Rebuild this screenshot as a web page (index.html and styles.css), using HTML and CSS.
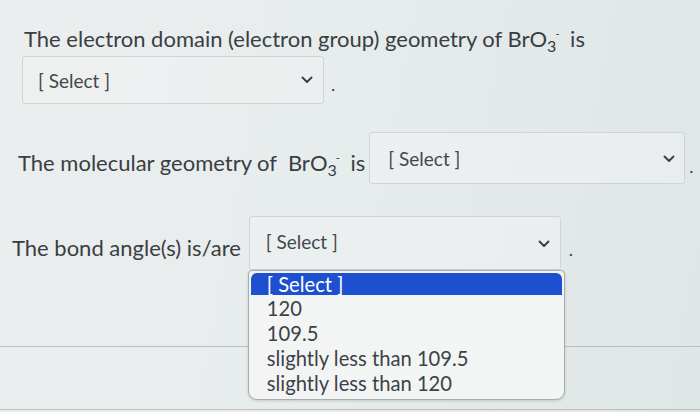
FILE: index.html
```html
<!DOCTYPE html>
<html>
<head>
<meta charset="utf-8">
<link rel="stylesheet" href="styles.css">
</head>
<body>
<div class="page">
  <p class="q q1">The electron domain (electron group) geometry of BrO<sub>3</sub><sup>-</sup> is</p>
  <div class="row r1">
    <div class="select s1"><span class="val">[ Select ]</span><svg class="chev" width="12" height="8" viewBox="0 0 12 8"><path d="M1.5 1.5 L6 6 L10.5 1.5" fill="none" stroke="#3d4247" stroke-width="2" stroke-linecap="round" stroke-linejoin="round"/></svg></div>
    <span class="dot">.</span>
  </div>

  <div class="row r2">
    <span class="q">The molecular geometry of &nbsp;BrO<sub>3</sub><sup>-</sup> is</span>
    <div class="select s2"><span class="val">[ Select ]</span><svg class="chev" width="12" height="8" viewBox="0 0 12 8"><path d="M1.5 1.5 L6 6 L10.5 1.5" fill="none" stroke="#3d4247" stroke-width="2" stroke-linecap="round" stroke-linejoin="round"/></svg></div>
    <span class="dot">.</span>
  </div>

  <div class="row r3">
    <span class="q">The bond angle(s) is/are</span>
    <div class="select s3"><span class="val">[ Select ]</span><svg class="chev" width="12" height="8" viewBox="0 0 12 8"><path d="M1.5 1.5 L6 6 L10.5 1.5" fill="none" stroke="#3d4247" stroke-width="2" stroke-linecap="round" stroke-linejoin="round"/></svg>
      <ul class="list">
        <li class="hl">[ Select ]</li>
        <li>120</li>
        <li>109.5</li>
        <li>slightly less than 109.5</li>
        <li>slightly less than 120</li>
      </ul>
    </div>
    <span class="dot">.</span>
  </div>

  <hr class="rule rule1">
  <hr class="rule rule2">
</div>
</body>
</html>
```

FILE: styles.css
```css
html, body {
  margin: 0;
  padding: 0;
}
body {
  width: 700px;
  height: 412px;
  overflow: hidden;
  background: linear-gradient(100deg, #ebeeee 0%, #e7ecec 45%, #dfe6e6 100%);
  font-family: Lato, "Open Sans", sans-serif;
  color: #393e43;
}
.page {
  position: relative;
  height: 412px;
}
.q {
  font-size: 22px;
  line-height: 24px;
  margin: 0;
  white-space: nowrap;
}
.q sub {
  font-size: 16px;
  vertical-align: -5px;
  line-height: 0;
}
.q sup {
  font-size: 11px;
  vertical-align: 9px;
  line-height: 0;
  margin-left: -1px;
  margin-right: 5px;
}
.q1 {
  padding: 27px 0 0 24px;
}
.row {
  display: flex;
  align-items: flex-start;
}
.select {
  position: relative;
  box-sizing: border-box;
  display: flex;
  align-items: center;
  justify-content: space-between;
  border: 1px solid #cfd5d5;
  border-radius: 3px;
  background: rgba(240, 243, 243, 0.55);
  font-size: 19px;
  color: #43484d;
}
.val {
  white-space: nowrap;
}
.chev {
  display: block;
}
.dot {
  font-size: 18px;
  color: #3b4045;
}
.r1 {
  margin: 5px 0 0 22px;
}
.s1 {
  width: 302px;
  height: 48px;
  padding: 0 10px 0 15px;
}
.r1 .dot {
  margin: 17px 0 0 7px;
}
.r2 {
  margin-top: 28px;
  padding-left: 18px;
}
.r2 .q {
  margin-top: 19px;
}
.s2 {
  width: 316px;
  height: 52px;
  margin-left: 4px;
  padding: 0 9px 0 18px;
  align-items: flex-start;
}
.s2 .val {
  margin-top: 14px;
}
.s2 .chev {
  margin-top: 22px;
}
.r2 .dot {
  margin: 23px 0 0 4px;
}
.r3 {
  margin-top: 32px;
  padding-left: 12px;
}
.r3 .q {
  margin-top: 20px;
}
.s3 {
  width: 312px;
  height: 54px;
  margin-left: 8px;
  padding: 0 10px 0 16px;
  align-items: flex-start;
}
.s3 .val {
  margin-top: 13px;
}
.s3 .chev {
  margin-top: 23px;
}
.r3 .dot {
  margin: 22px 0 0 8px;
}
.list {
  position: absolute;
  left: -2px;
  top: 53px;
  width: 317px;
  box-sizing: border-box;
  margin: 0;
  padding: 2px 2px 3px;
  list-style: none;
  background: #f3f5f5;
  border: 1px solid #a6adad;
  border-radius: 4px 4px 9px 9px;
  box-shadow: 0 1px 3px rgba(0,0,0,0.15);
  z-index: 2;
  font-size: 20.2px;
  color: #3d4247;
}
.list li {
  height: 25px;
  line-height: 25px;
  padding-left: 16px;
  white-space: nowrap;
}
.list li.hl {
  height: 22px;
  line-height: 22px;
  background: #1d50d0;
  color: #ffffff;
  border-radius: 6px 6px 0 0;
  margin-bottom: 1px;
}
.rule {
  border: 0;
  height: 1px;
  background: #b9c0c0;
  margin: 0;
}
.rule1 {
  margin-top: 76px;
}
.rule2 {
  margin-top: 62px;
}
```
